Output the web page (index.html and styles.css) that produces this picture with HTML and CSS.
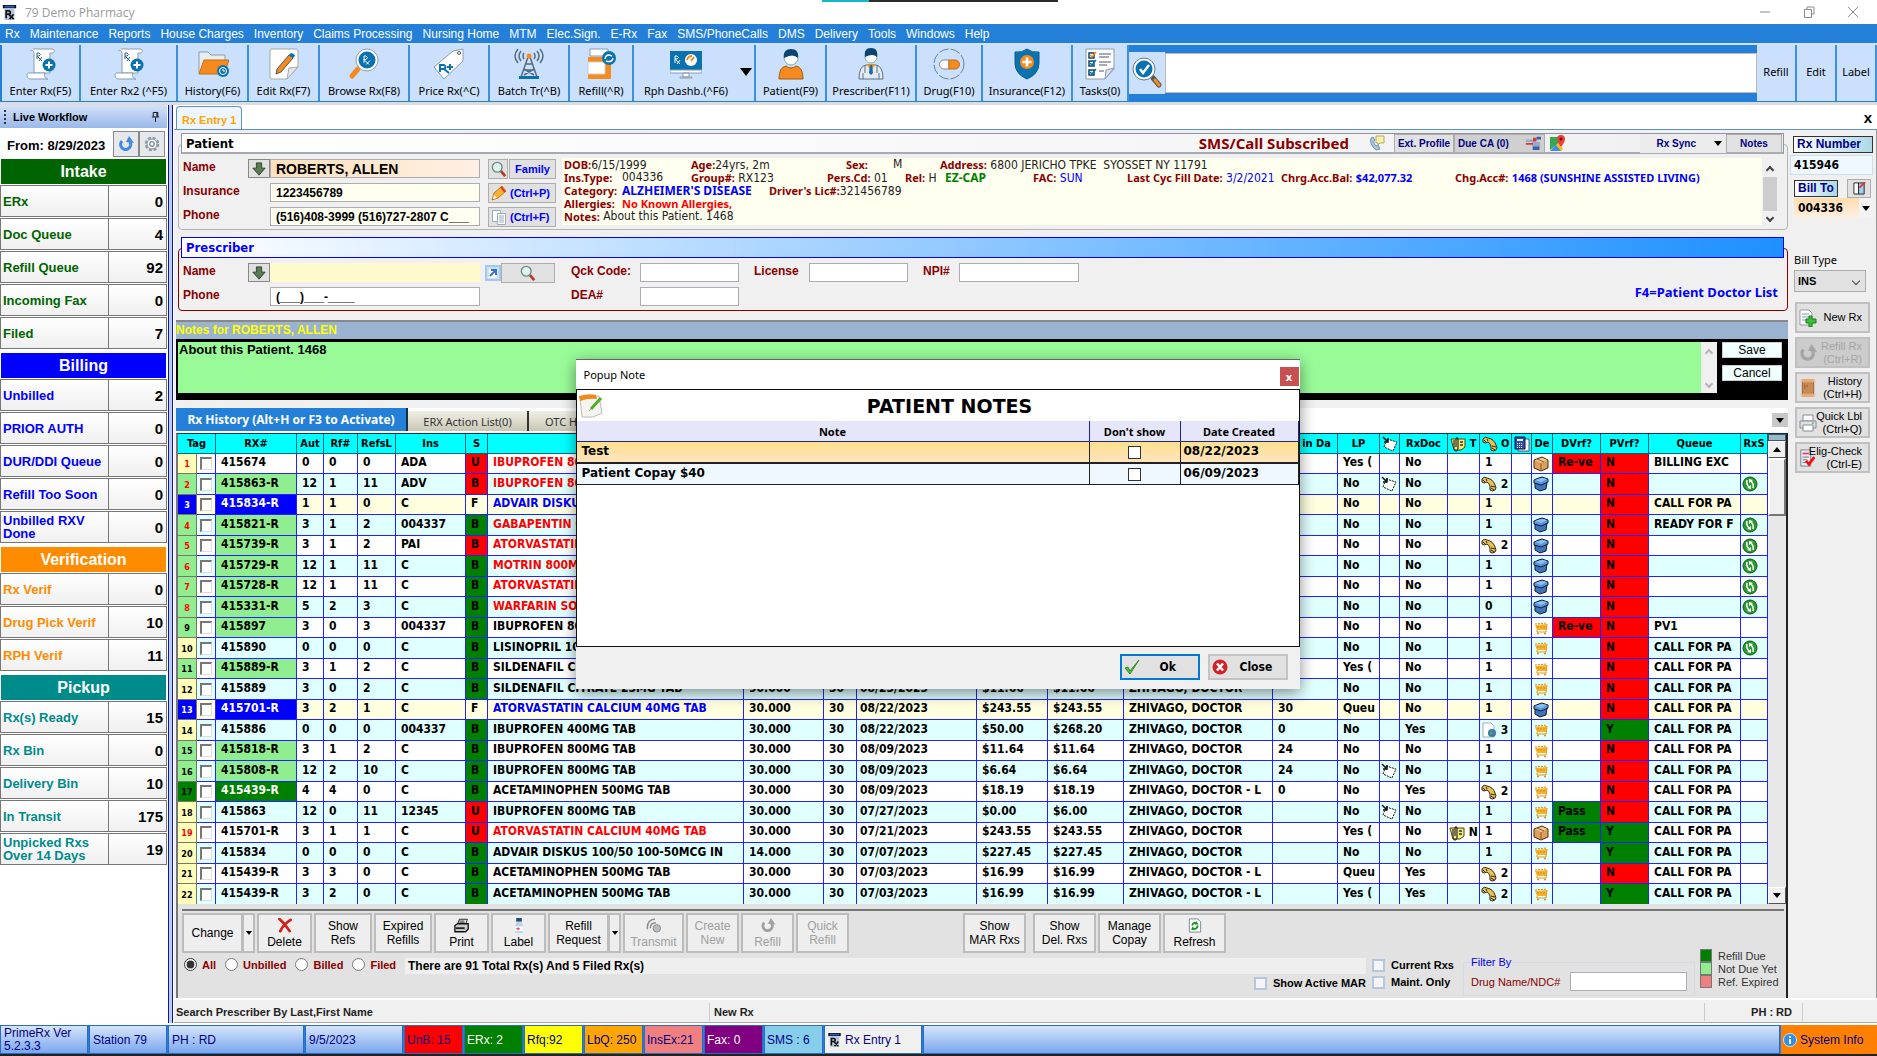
FILE: index.html
```html
<!DOCTYPE html>
<html lang="en">
<head>
<meta charset="utf-8">
<title>79 Demo Pharmacy</title>
<link rel="stylesheet" href="styles.css">
</head>
<body>
<svg class="sprite" aria-hidden="true">
    <symbol id="i-app" viewBox="0 0 16 18"><path fill="#111" d="M0 0h16v4H0z"/><path fill="#2b5dd0" d="M2 1h12v2H2z"/><path fill="#b8c4dc" d="M2 4h12v14H2z"/><path stroke="#111" stroke-width="2" d="M4 16V7h3a2 2 0 0 1 0 4H4m3 0 6 6m0-6-5 6"/></symbol>
    <symbol id="i-scroll" viewBox="0 0 32 32"><path fill="#fff" stroke="#8a9db0" d="M8 1h19c3 0 3 4 0 4h-2v20H9V6C9 3 7 1 5 3"/><path fill="#fff" stroke="#8a9db0" d="M4 25h16c-1 3 0 6 3 6H6c-5 0-5-6-2-6z"/><path stroke="#33628a" d="M12 11V5h2q3 1.500 0 3h-2l5 5m0-4-3 4"/><circle cx="24" cy="17" r="6.500" fill="#0b72b0"/><path stroke="#fff" stroke-width="2" d="M24 13.500v7M20.500 17h7"/></symbol>
    <symbol id="i-folder" viewBox="0 0 32 32"><path fill="#e8edf2" stroke="#8a9db0" d="M2 4h9l3 3h14v18H2z"/><path fill="#f58a1f" stroke="#c96a10" d="M7 12h25l-5 14H2z"/><circle cx="26" cy="23" r="6" fill="#0b72b0"/><circle cx="26" cy="23" r="3.500" stroke="#fff"/><path stroke="#fff" d="M26 21v2h2"/></symbol>
    <symbol id="i-edit" viewBox="0 0 32 32"><path fill="#fff" stroke="#a9a9a9" d="M4 1h24q2 0 2 2v16L19 31H4q-2 0-2-2V3q0-2 2-2z"/><path fill="#e6e6e6" stroke="#a9a9a9" d="m30 19-9 1-2 11z"/><path fill="#f58a1f" stroke="#555" d="m9 21 12-14 4 3-12 14-5 2z"/><path fill="#0b72b0" d="m21 7 2-2q4 1 4 3l-2 2z"/></symbol>
    <symbol id="i-browse" viewBox="0 0 32 32"><path stroke="#f58a1f" stroke-width="5" stroke-linecap="round" d="m4 28 6-7"/><circle cx="19" cy="12" r="11" fill="#fff" stroke="#8a9db0"/><circle cx="19" cy="12" r="8.500" fill="#0b72b0"/><path stroke="#fff" d="M16 15V8h2q3 1.500 0 3.500h-2l5 5m1-4-4 4"/></symbol>
    <symbol id="i-price" viewBox="0 0 32 32"><path fill="#fff" stroke="#8a9db0" d="m20 3 10-2v12L11 31 1 19z"/><circle cx="26" cy="5" r="1.500" stroke="#555"/><path stroke="#0b72b0" stroke-width="2" d="M7 24v-7h4q3 2 0 4H7m4 0 5 4m-2-6h6m-3-3v6"/></symbol>
    <symbol id="i-tower" viewBox="0 0 32 32"><path stroke="#556b80" stroke-width="1.500" d="M15 9 8 29m9-20 7 20M12 16h8M11 21l10 6M21 21l-10 6M10 22h12M11 5q-2 3 0 6M8 3q-4 5 0 10M5 1Q-1 8 5 15M21 5q2 3 0 6M24 3q4 5 0 10M27 1q6 7 0 14"/><circle cx="16" cy="8" r="2.500" fill="#f58a1f"/><path fill="#0b72b0" d="M6 28h20v3H6z"/></symbol>
    <symbol id="i-bottle" viewBox="0 0 32 32"><path fill="#fff" stroke="#8a9db0" d="M5 1h18v7H5z"/><path fill="#f58a1f" d="M3 9h23v22H3z"/><path fill="#fff" stroke="#ccc" d="M3 14h17v12H3z"/><circle cx="24" cy="10" r="7" fill="#0b72b0"/><path stroke="#fff" stroke-width="1.500" d="M20 11q1-6 7-3m1 2q-1 5-7 3"/></symbol>
    <symbol id="i-dash" viewBox="0 0 32 32"><path fill="#0b72b0" d="M0 3h32v20H0z"/><path fill="#fff" stroke="#8a9db0" d="M0 22h32v3H0zM13 25h6v4h-6zM10 29h12v1H10z"/><circle cx="21" cy="12" r="6" fill="#fff"/><path stroke="#f58a1f" stroke-width="2" d="m21 13 3-4m-7 3q1-4 5-4"/><path stroke="#fff" d="M5 15V8h2q3 1.500 0 3H5l5 5m0-4-3 4"/></symbol>
    <symbol id="i-patient" viewBox="0 0 32 32"><circle cx="16" cy="10" r="7" fill="#fff" stroke="#8aa"/><path fill="#0b4470" d="M9 10C8 4 11 1 16 1s8 3 7 9q-5-5-14 0z"/><path fill="#f58a1f" stroke="#a55a10" d="M4 31q0-12 7-13 5 4 10 0 7 1 7 13z"/></symbol>
    <symbol id="i-doctor" viewBox="0 0 32 32"><circle cx="16" cy="9" r="6" fill="#fff" stroke="#8aa"/><path fill="#0b4470" d="M10 9C9 3 11 0 16 0s7 3 6 9q-4-4-12 0z"/><path fill="#e4eaf0" stroke="#5d7387" d="M4 31q0-13 7-14h10q7 1 7 14z"/><path fill="#f58a1f" d="m12 16 4 8 4-8z"/><path fill="#0b72b0" d="M15 17h2l1 8-2 2-2-2z"/><path stroke="#5d7387" d="M10 17v8m12-8v8M8 25v6m16-6v6"/></symbol>
    <symbol id="i-drug" viewBox="0 0 32 32"><circle cx="16" cy="16" r="15" stroke="#6f8191" stroke-dasharray="10 2"/><path fill="#fff" stroke="#888" d="M16 12h-5a4 4 0 0 0 0 9h5z"/><path fill="#f58a1f" stroke="#c96a10" d="M16 12h6a4 4 0 0 1 0 9h-6z"/></symbol>
    <symbol id="i-shield" viewBox="0 0 32 32"><path fill="#0b72b0" stroke="#085a8c" d="M4 4q7 1 12-3 5 4 12 3v11q0 11-12 16Q4 26 4 15z"/><circle cx="16" cy="14" r="7" fill="#f58a1f"/><path stroke="#fff" stroke-width="2.500" d="M16 9.500v9M11.500 14h9"/></symbol>
    <symbol id="i-tasks" viewBox="0 0 32 32"><path fill="#fff" stroke="#8a9db0" d="M2 1h28v20l-9 10H2z"/><path fill="#dde" stroke="#8a9db0" d="m30 20-8 2-1 9z"/><path stroke="#0b4470" stroke-width="1.500" d="M5 5h5v5H5zM5 13h5v5H5zM5 22h5v5H5z"/><path stroke="#f58a1f" stroke-width="1.500" d="m6 7 2 2 4-5"/><path stroke="#0b72b0" stroke-width="1.500" d="m6 15 2 2 4-5m-6 12 2 2 4-5"/><path stroke="#556" d="M15 6h12M15 9h10M15 14h12M15 17h8M15 23h5"/></symbol>
    <symbol id="i-find" viewBox="0 0 32 32"><path stroke="#555" stroke-width="5" stroke-linecap="round" d="m22 21 6 7"/><path stroke="#f58a1f" stroke-width="3" stroke-linecap="round" d="m24 23 4 5"/><circle cx="13" cy="12" r="11" fill="#fff" stroke="#678"/><circle cx="13" cy="12" r="8.500" fill="#0b72b0"/><path stroke="#fff" stroke-width="2.500" d="m9 12 3 4 6-8"/></symbol>
    <symbol id="i-reload" viewBox="0 0 16 16"><path stroke="currentColor" stroke-width="3" d="M4 5a5 5 0 1 0 8 1"/><path fill="currentColor" d="m8 6 3-6 5 7z"/></symbol>
    <symbol id="i-gear" viewBox="0 0 16 16"><circle cx="8" cy="8" r="6" stroke="#8a97a5" stroke-width="2.500" stroke-dasharray="3 1.700"/><circle cx="8" cy="8" r="5" fill="#fff" stroke="#8a97a5"/><circle cx="8" cy="8" r="2.200" stroke="#8a97a5" stroke-width="1.500"/></symbol>
    <symbol id="i-pin" viewBox="0 0 10 12"><path stroke="#000" d="M2.500 6V1.500h5V6M1 6.500h8M5 7v5M6.500 2v4"/></symbol>
    <symbol id="i-down" viewBox="0 0 16 16"><path fill="#5c7a55" stroke="#263e22" d="M5 1h6v6h4l-7 8-7-8h4z"/></symbol>
    <symbol id="i-lens" viewBox="0 0 18 18"><path stroke="#b33a2a" stroke-width="3" d="m11 11 5 6"/><circle cx="7" cy="7" r="5.500" fill="#dff3ee" stroke="#6b8b83" stroke-width="1.500"/></symbol>
    <symbol id="i-pencil" viewBox="0 0 16 16"><path fill="#f9b233" stroke="#c4761a" d="M1 15 3 8l8-7 4 5-8 7z"/><path fill="#fff" d="m2 14 1-4 3 3z"/><path stroke="#d33" stroke-width="2" d="m10 2 4 5"/></symbol>
    <symbol id="i-copy" viewBox="0 0 16 16"><path fill="#fff" stroke="#9ab" d="M1.500 1.500h8v11h-8z"/><path fill="#fff" stroke="#9ab" d="M6.500 4.500h8v11h-8z"/><path stroke="#9ab" d="M8 7h5M8 9h5M8 11h5M8 13h5"/></symbol>
    <symbol id="i-link" viewBox="0 0 16 16"><path fill="#c9e0fa" stroke="#a5c8ee" stroke-width="2" d="M1 1h14v14H1z"/><path fill="#fff" d="M4 4h8v9H4z"/><path stroke="#3573c4" stroke-width="2" d="m5 11 6-6M6 5h5v5"/></symbol>
    <symbol id="i-call" viewBox="0 0 16 16"><path fill="#a9c4dd" stroke="#6f93b5" d="M2 3q-2 6 5 12l4-1-2-4-2 1q-3-3-2-5l1-1-2-3z"/><path fill="#fbf0b0" stroke="#b9a860" d="M7 1h8v7h-4l-2 2V8H7z"/></symbol>
    <symbol id="i-tool" viewBox="0 0 18 16"><path fill="#9aa9c4" d="M1 4h11v3H1zM8 7h9v9H8z"/><path fill="#d33" d="M1 8h8v2H1zM9 2h4v4H9z"/><path fill="#3b5ea8" d="M13 1h5v3h-5zM9 12h7v4H9z"/></symbol>
    <symbol id="i-map" viewBox="0 0 16 16"><path fill="#34a853" d="M1 2h9v6L1 15z"/><path fill="#fbbc04" d="m9 8 5 6-2 2-5-5z"/><path fill="#4285f4" d="m1 16 6-6 5 6z"/><path fill="#ea4335" d="M12 0a4 4 0 0 1 4 4q0 3-4 8-4-5-4-8a4 4 0 0 1 4-4z"/><circle cx="12" cy="4" r="1.500" fill="#701"/></symbol>
    <symbol id="i-form" viewBox="0 0 16 14"><path fill="#fff" stroke="#222" d="M2 1h5v12H2z"/><path fill="#9fd3ee" stroke="#222" d="M7 1h6v12H7z"/><path stroke="#d33" stroke-width="2" d="m8 6 6-6"/></symbol>
    <symbol id="i-newrx" viewBox="0 0 18 18"><path fill="#fff" stroke="#99a" d="M1 1h9l3 3v12H1z"/><path stroke="#7a9bc0" d="M3 5h7M3 8h7M3 11h5"/><path fill="#3fbf35" stroke="#1d7a18" d="M10 7h3v3h4v4h-4v4h-3v-4H7v-4h3z"/></symbol>
    <symbol id="i-roll" viewBox="0 0 18 22"><path fill="#c98a54" stroke="#8d5428" d="M2 3h14v16H2z"/><path fill="#e3ac7a" d="M1 0h16v4H1zM1 18h16v4H1z"/><path stroke="#8d5428" d="M5 7v5m3-5v3"/></symbol>
    <symbol id="i-printer" viewBox="0 0 18 18"><path fill="#fff" stroke="#889" d="M4 1h10v6H4z"/><path fill="#dde3e0" stroke="#889" d="M1 7h16v7H1z"/><path fill="#fff" stroke="#889" d="M4 11h10v6H4z"/><path stroke="#3a3" d="M13 9h2"/></symbol>
    <symbol id="i-elig" viewBox="0 0 18 20"><path fill="#e9e9f2" stroke="#778" d="M1 1h11v18H1z"/><path stroke="#d6466c" stroke-width="2" d="M3 5h7"/><path stroke="#667" d="M3 9h7M3 12h5M3 15h4"/><path stroke="#f01010" stroke-width="3" d="m7 13 3 4 6-8"/></symbol>
    <symbol id="i-x" viewBox="0 0 16 16"><path stroke="#d4201c" stroke-width="3" stroke-linecap="round" d="M2 1q6 5 11 13M14 2Q6 7 3 14"/></symbol>
    <symbol id="i-print" viewBox="0 0 18 16"><path fill="#fff" stroke="#111" d="M6 1h9l-2 6H4z"/><path stroke="#111" d="M6 3h6M6 5h6"/><path fill="#ccc" stroke="#111" stroke-width="1.500" d="M1 8l3-2h12v6l-3 3H1z"/><path fill="#222" d="M2 10h10v2H2z"/></symbol>
    <symbol id="i-vial" viewBox="0 0 12 16"><path fill="#24506e" d="M3 0h6v4H3z"/><path fill="#b8d4ea" d="M4 4h4l2 3v9H2V7z"/><path fill="#fff" d="M2 9h8v5H2z"/><path stroke="#d33" d="M3 11.500h4M5 10v3"/></symbol>
    <symbol id="i-dish" viewBox="0 0 16 16"><path stroke="#8c8c8c" stroke-width="1.500" d="M1 12Q0 2 9 1M4 11q0-6 6-6"/><circle cx="11" cy="11" r="4" fill="#bbb" stroke="#8c8c8c"/></symbol>
    <symbol id="i-refresh" viewBox="0 0 14 16"><path fill="#fff" stroke="#789" d="M1 1h9l3 3v11H1z"/><path stroke="#169a1c" stroke-width="2" d="M4 8q1-4 5-2m1 2q-1 5-6 3"/><path fill="#169a1c" d="m8 3 3 4H7zM3 13l1-4 3 3z"/></symbol>
    <symbol id="i-info" viewBox="0 0 14 14"><circle cx="7" cy="7" r="6.500" fill="#2f8fe6" stroke="#bfe0fa"/><path stroke="#fff" stroke-width="2" d="M7 3v2m0 1v5"/></symbol>
    <symbol id="i-note" viewBox="0 0 16 16"><path fill="#fff" stroke="#111" stroke-dasharray="2 1" d="m5 3 10 3-4 9-9-4z"/><path stroke="#111" stroke-width="1.500" d="m1 1 5 5m0-4v4H2"/></symbol>
    <symbol id="i-phone" viewBox="0 0 16 16"><path fill="#e8c15c" stroke="#33250a" d="M1 3q2-3 5-1 6 1 8 7 2 3 0 5-3 2-5 0v-4Q8 7 6 6q-3 2-5 0z"/><path stroke="#33250a" d="m2 4 2 2m1-3 1 2m4 5 4 1m-4 1 3 2"/></symbol>
    <symbol id="i-page" viewBox="0 0 16 16"><path fill="#fff" stroke="#aab" d="M2 1h8l3 3v11H2z"/><circle cx="11" cy="11" r="4" fill="#3a78b8"/><path fill="#4fae4a" d="m9 9 3 1-1 3-2-1z"/></symbol>
    <symbol id="i-clip" viewBox="0 0 16 16"><path fill="#f7ec7a" stroke="#4a4310" d="M1 3h14v8l-4 3H4z"/><path stroke="#333" stroke-width="1.300" d="M4 4v9q2 4 4 0V3q-1-2-2 0v8M10 6h3M10 9h3"/></symbol>
    <symbol id="i-calc" viewBox="0 0 16 16"><path fill="#fff" stroke="#557" d="M4 3h11v12H4z"/><path fill="#3848b4" stroke="#114" d="M1 1h10v12H1z"/><path fill="#cfe" d="M3 3h6v2H3z"/><path stroke="#cfe" stroke-dasharray="1 1" d="M3 7.500h6M3 9.500h6M3 11.500h6"/></symbol>
    <symbol id="i-box" viewBox="0 0 16 16"><path fill="#dca05c" stroke="#4c2c0c" d="m1 4 8-3 6 3v8l-7 3-7-3z"/><path fill="#f3cc98" d="m2 4 7-2 5 2-6 3z"/><path stroke="#8a5b28" d="M8 7v8M4 3l7 3"/></symbol>
    <symbol id="i-bin" viewBox="0 0 16 16"><path fill="#3f74b8" stroke="#0c1c3c" d="M2 7v5l5 3 6-2 1-7z"/><path fill="#5b95da" stroke="#0c1c3c" d="M1 4q4-2 8-3l6 2v3l-7 3-7-2z"/><path fill="#8fc0f2" d="m2 4 7-2 5 1-6 3z"/></symbol>
    <symbol id="i-cart" viewBox="0 0 16 16"><path fill="#f7b12a" d="m2 5 12-1-1 6H4z"/><path stroke="#d98a10" stroke-dasharray="2 1" d="M2 4l12-1M4 7h9"/><path stroke="#e09a1c" d="M4 10v2h9l1-8"/><circle cx="5" cy="13.500" r="1" fill="#d98a10"/><circle cx="12" cy="13.500" r="1" fill="#d98a10"/></symbol>
    <symbol id="i-sync" viewBox="0 0 16 16"><circle cx="8" cy="8" r="7" fill="#2b9a30" stroke="#0c5a12"/><path stroke="#fff" stroke-width="1.500" d="M5 4q-1 4 2 7m4 1q1-4-2-7"/><path fill="#fff" d="m5 12 4 1V9zM11 4 7 3v4z"/></symbol>
    <symbol id="i-pad" viewBox="0 0 24 24"><path fill="#f4f4f0" stroke="#bbb" d="m1 3 19-1 3 17-9 4H3z"/><path fill="#f08a1c" d="M0 2q10-3 17-1l1 4Q9 4 1 7z"/><path stroke="#4fae2a" stroke-width="3" d="m12 15 10-11"/><path stroke="#c9a" d="m10 17 2-2"/></symbol>
    <symbol id="i-check" viewBox="0 0 16 16"><path fill="#4cc23f" stroke="#2c8a26" d="m1 9 3-1 2 4L15 1 6 15z"/></symbol>
    <symbol id="i-stop" viewBox="0 0 16 16"><circle cx="8" cy="8" r="7.500" fill="#d3222a"/><path stroke="#fff" stroke-width="2.500" d="m5 4.500 6 7m0-7-6 7"/></symbol>
</svg>

<div class="app">
    <header class="titlebar">
        <svg class="app-icon"><use href="#i-app"/></svg>
        <span>79 Demo Pharmacy</span>
        <div class="top-strip"></div>
        <div class="win-buttons">
            <button type="button" aria-label="Minimize"><svg viewBox="0 0 12 12"><path d="M1 6h10"/></svg></button>
            <button type="button" aria-label="Restore"><svg viewBox="0 0 12 12"><path d="M1.500 3.500h7v8h-7zM4 3V1h7v7H9"/></svg></button>
            <button type="button" aria-label="Close window"><svg viewBox="0 0 12 12"><path d="m1 1 10 10M11 1 1 11"/></svg></button>
        </div>
    </header>

    <nav class="menubar">
        <a href="#">Rx</a><a href="#">Maintenance</a><a href="#">Reports</a><a href="#">House Charges</a><a href="#">Inventory</a><a href="#">Claims Processing</a><a href="#">Nursing Home</a><a href="#">MTM</a><a href="#">Elec.Sign.</a><a href="#">E-Rx</a><a href="#">Fax</a><a href="#">SMS/PhoneCalls</a><a href="#">DMS</a><a href="#">Delivery</a><a href="#">Tools</a><a href="#">Windows</a><a href="#">Help</a>
    </nav>

    <div class="toolbar">
        <button type="button" class="w78"><svg><use href="#i-scroll"/></svg>Enter Rx(F5)</button>
        <button type="button" class="w96"><svg><use href="#i-scroll"/></svg>Enter Rx2 (^F5)</button>
        <button type="button" class="w71"><svg><use href="#i-folder"/></svg>History(F6)</button>
        <button type="button" class="w71"><svg><use href="#i-edit"/></svg>Edit Rx(F7)</button>
        <button type="button" class="w90"><svg><use href="#i-browse"/></svg>Browse Rx(F8)</button>
        <button type="button" class="w80"><svg><use href="#i-price"/></svg>Price Rx(^C)</button>
        <button type="button" class="w80"><svg><use href="#i-tower"/></svg>Batch Tr(^B)</button>
        <button type="button" class="w64"><svg><use href="#i-bottle"/></svg>Refill(^R)</button>
        <button type="button" class="w104"><svg><use href="#i-dash"/></svg>Rph Dashb.(^F6)</button>
        <button type="button" class="drop" aria-label="Dashboard options"><i class="tri big"></i></button>
        <button type="button" class="w71"><svg><use href="#i-patient"/></svg>Patient(F9)</button>
        <button type="button" class="w90"><svg><use href="#i-doctor"/></svg>Prescriber(F11)</button>
        <button type="button" class="w66"><svg><use href="#i-drug"/></svg>Drug(F10)</button>
        <button type="button" class="w90"><svg><use href="#i-shield"/></svg>Insurance(F12)</button>
        <button type="button" class="w56"><svg><use href="#i-tasks"/></svg>Tasks(0)</button>
        <div class="quick-find">
            <svg><use href="#i-find"/></svg>
            <input type="text" aria-label="Quick search">
        </div>
        <button type="button" class="w40">Refill</button>
        <button type="button" class="w40">Edit</button>
        <button type="button" class="w40">Label</button>
    </div>

    <div class="middle">
        <aside class="sidebar">
            <div class="side-head"><i class="grip"></i><b>Live Workflow</b><svg><use href="#i-pin"/></svg></div>
            <div class="side-from">
                <span>From: 8/29/2023</span>
                <button type="button" aria-label="Reload" class="blue"><svg><use href="#i-reload"/></svg></button>
                <button type="button" aria-label="Settings"><svg><use href="#i-gear"/></svg></button>
            </div>
            <section class="queue intake">
                <h2>Intake</h2>
                <dl>
                    <dt>ERx</dt><dd>0</dd>
                    <dt>Doc Queue</dt><dd>4</dd>
                    <dt>Refill Queue</dt><dd>92</dd>
                    <dt>Incoming Fax</dt><dd>0</dd>
                    <dt>Filed</dt><dd>7</dd>
                </dl>
            </section>
            <section class="queue billing">
                <h2>Billing</h2>
                <dl>
                    <dt>Unbilled</dt><dd>2</dd>
                    <dt>PRIOR AUTH</dt><dd>0</dd>
                    <dt>DUR/DDI Queue</dt><dd>0</dd>
                    <dt>Refill Too Soon</dt><dd>0</dd>
                    <dt>Unbilled RXV Done</dt><dd>0</dd>
                </dl>
            </section>
            <section class="queue verif">
                <h2>Verification</h2>
                <dl>
                    <dt>Rx Verif</dt><dd>0</dd>
                    <dt>Drug Pick Verif</dt><dd>10</dd>
                    <dt>RPH Verif</dt><dd>11</dd>
                </dl>
            </section>
            <section class="queue pickup">
                <h2>Pickup</h2>
                <dl>
                    <dt>Rx(s) Ready</dt><dd>15</dd>
                    <dt>Rx Bin</dt><dd>0</dd>
                    <dt>Delivery Bin</dt><dd>10</dd>
                    <dt>In Transit</dt><dd>175</dd>
                    <dt>Unpicked Rxs Over 14 Days</dt><dd>19</dd>
                </dl>
            </section>
        </aside>
        <div class="splitter"></div>

        <main class="work">
            <div class="doc-tabs">
                <a href="#" class="doc-tab">Rx Entry 1</a>
                <button type="button" class="doc-close" aria-label="Close tab">x</button>
            </div>

            <div class="work-body">
                <div class="entry">
                    <section class="group patient">
                        <div class="group-head">
                            <h3>Patient</h3>
                            <strong class="sms">SMS/Call Subscribed</strong>
                            <svg class="ic16"><use href="#i-call"/></svg>
                            <button type="button" class="ext">Ext. Profile</button>
                            <button type="button" class="due">Due CA (0)<svg class="ic16"><use href="#i-tool"/></svg></button>
                            <svg class="ic16 map"><use href="#i-map"/></svg>
                            <button type="button" class="sync">Rx Sync<i class="tri"></i></button>
                            <button type="button" class="notes-btn">Notes</button>
                        </div>
                        <div class="group-body">
                            <div class="fields">
                                <label for="p-name">Name</label>
                                <button type="button" class="pick" aria-label="Pick patient"><svg><use href="#i-down"/></svg></button>
                                <input id="p-name" class="name" type="text" value="ROBERTS, ALLEN">
                                <label for="p-ins">Insurance</label>
                                <input id="p-ins" class="col3 ivory" type="text" value="1223456789">
                                <label for="p-phone">Phone</label>
                                <input id="p-phone" class="col3 ivory" type="text" value="(516)408-3999 (516)727-2807 C___">
                            </div>
                            <div class="side-buttons">
                                <div><button type="button" class="lens" aria-label="Find patient"><svg><use href="#i-lens"/></svg></button><button type="button" class="fam">Family</button></div>
                                <button type="button"><svg><use href="#i-pencil"/></svg>(Ctrl+P)</button>
                                <button type="button"><svg><use href="#i-copy"/></svg>(Ctrl+F)</button>
                            </div>
                            <div class="info">
                                <div class="info-text">
                                    <p><span class="c1"><b>DOB:</b>6/15/1999</span><span class="c2"><b>Age:</b>24yrs, 2m</span><span class="c3"><b>Sex:</b></span><span class="c4">M</span><span><b>Address:</b> 6800 JERICHO TPKE &nbsp;SYOSSET NY 11791</span></p>
                                    <p><span class="c0"><b>Ins.Type:</b></span><span class="c01">004336</span><span class="c5"><b>Group#:</b> RX123</span><span class="c6"><b>Pers.Cd:</b> 01</span><span class="c7"><b>Rel:</b> H</span><span class="c8 ez">EZ-CAP</span><span class="c9"><b>FAC:</b> <i>SUN</i></span><span class="c10"><b>Last Cyc Fill Date:</b> <i>3/2/2021</i></span><span class="c11"><b>Chrg.Acc.Bal:</b> <em>$42,077.32</em></span><span><b>Chg.Acc#:</b> <em>1468 (SUNSHINE ASSISTED LIVING)</em></span></p>
                                    <p><span class="c0"><b>Category:</b></span><span class="c12"><em class="large">ALZHEIMER'S DISEASE</em></span><span><b>Driver's Lic#:</b>321456789</span></p>
                                    <p><span class="c0"><b>Allergies:</b></span><span class="red">No Known Allergies,</span></p>
                                    <p><b>Notes:</b> About this Patient. 1468</p>
                                </div>
                                <div class="vbar"><i class="chev up"></i><i class="thumb"></i><i class="chev"></i></div>
                            </div>
                        </div>
                    </section>

                    <section class="group prescriber">
                        <div class="group-head"><h3>Prescriber</h3></div>
                        <div class="group-body">
                            <div class="fields">
                                <label for="d-name">Name</label>
                                <button type="button" class="pick" aria-label="Pick prescriber"><svg><use href="#i-down"/></svg></button>
                                <input id="d-name" class="lemon" type="text">
                                <label for="d-phone">Phone</label>
                                <input id="d-phone" class="col3" type="text" value="(___)___-____">
                            </div>
                            <div class="find-pair"><svg class="ic16"><use href="#i-link"/></svg><button type="button" aria-label="Find prescriber"><svg class="ic16"><use href="#i-lens"/></svg></button></div>
                            <div class="codes">
                                <label for="qck">Qck Code:</label><input id="qck" type="text">
                                <label for="lic">License</label><input id="lic" type="text">
                                <label for="npi">NPI#</label><input id="npi" type="text">
                                <label for="dea">DEA#</label><input id="dea" type="text">
                            </div>
                            <strong class="f4">F4=Patient Doctor List</strong>
                        </div>
                    </section>

                    <section class="notes">
                        <h3>Notes for ROBERTS, ALLEN</h3>
                        <div class="notes-body">
                            <textarea aria-label="Patient note">About this Patient. 1468</textarea>
                            <div class="vbar"><i class="chev up pale"></i><i class="chev pale"></i></div>
                            <div class="notes-buttons">
                                <button type="button">Save</button>
                                <button type="button">Cancel</button>
                            </div>
                        </div>
                    </section>

                    <div class="tabs">
                        <button type="button" class="on">Rx History (Alt+H or F3 to Activate)</button>
                        <button type="button">ERX Action List(0)</button>
                        <button type="button" class="otc">OTC History(0)</button>
                        <button type="button" class="more" aria-label="More tabs"><i class="tri"></i></button>
                    </div>

                    <div class="history">
                        <div class="grid-wrap">
                            <table class="grid">
                                <colgroup>
                                    <col class="k19"><col class="k19"><col class="k81"><col class="k27"><col class="k34"><col class="k38"><col class="k70"><col class="k22"><col><col class="k80"><col class="k33"><col class="k120"><col class="k71"><col class="k76"><col class="k149"><col class="k65"><col class="k42"><col class="k20"><col class="k48"><col class="k32"><col class="k32"><col class="k20"><col class="k21"><col class="k48"><col class="k48"><col class="k92"><col class="k27">
                                </colgroup>
                                <thead>
                                    <tr>
                                        <th colspan="2">Tag</th><th>RX#</th><th>Aut</th><th>Rf#</th><th>RefsL</th><th>Ins</th><th>S</th><th>Drug</th><th>Qty</th><th>Ds</th><th>Fill Date</th><th>Cost</th><th>Price</th><th>Doctor</th><th class="end">in Da</th><th>LP</th><th><svg><use href="#i-note"/></svg></th><th>RxDoc</th><th><svg><use href="#i-clip"/></svg> T</th><th><svg><use href="#i-phone"/></svg> O</th><th><svg><use href="#i-calc"/></svg></th><th>De</th><th>DVrf?</th><th>PVrf?</th><th>Queue</th><th>RxS</th>
                                    </tr>
                                </thead>
                                <tbody id="rows"></tbody>
                            </table>
                            <div class="grid-bar"><i class="split"></i><i class="btn"><i class="tri upw"></i></i><i class="thumb"></i><i class="btn last"><i class="tri"></i></i></div>
                        </div>

                        <div class="actions">
                            <button type="button" class="a60">Change</button><button type="button" class="arrow" aria-label="Change options"><i class="tri sm"></i></button>
                            <button type="button" class="a56"><svg><use href="#i-x"/></svg>Delete</button>
                            <button type="button" class="a58">Show Refs</button>
                            <button type="button" class="a58">Expired Refills</button>
                            <button type="button" class="a56"><svg><use href="#i-print"/></svg>Print</button>
                            <button type="button" class="a56"><svg><use href="#i-vial"/></svg>Label</button>
                            <button type="button" class="a60">Refill Request</button><button type="button" class="arrow" aria-label="Refill options"><i class="tri sm"></i></button>
                            <button type="button" class="a60" disabled><svg><use href="#i-dish"/></svg>Transmit</button>
                            <button type="button" class="a54" disabled>Create New</button>
                            <button type="button" class="a54" disabled><svg><use href="#i-reload"/></svg>Refill</button>
                            <button type="button" class="a54" disabled>Quick Refill</button>
                            <button type="button" class="a64 apart"><span>Show<br>MAR Rxs</span></button>
                            <button type="button" class="a64 near"><span>Show<br>Del. Rxs</span></button>
                            <button type="button" class="a64">Manage Copay</button>
                            <button type="button" class="a64"><svg><use href="#i-refresh"/></svg>Refresh</button>
                        </div>

                        <div class="filters">
                            <div class="radios">
                                <label><input type="radio" name="f" checked>All</label>
                                <label><input type="radio" name="f">Unbilled</label>
                                <label><input type="radio" name="f">Billed</label>
                                <label><input type="radio" name="f">Filed</label>
                            </div>
                            <div class="count">
                                <p>There are 91 Total Rx(s) And 5 Filed Rx(s)</p>
                                <label><input type="checkbox">Show Active MAR</label>
                            </div>
                            <div class="checks">
                                <label><input type="checkbox">Current Rxs</label>
                                <label><input type="checkbox">Maint. Only</label>
                            </div>
                            <fieldset class="filter-by">
                                <legend>Filter By</legend>
                                <label for="ndc">Drug Name/NDC#</label>
                                <input id="ndc" type="text">
                            </fieldset>
                            <ul class="legend">
                                <li><i class="due-now"></i>Refill Due</li>
                                <li><i class="not-due"></i>Not Due Yet</li>
                                <li><i class="expired"></i>Ref. Expired</li>
                            </ul>
                        </div>
                    </div>
                </div>

                <aside class="rail">
                    <b class="rail-label">Rx Number</b>
                    <input class="rx-no" type="text" value="415946" aria-label="Rx Number">
                    <div class="bill-row"><b class="rail-label">Bill To</b><button type="button" aria-label="Edit bill to"><svg><use href="#i-form"/></svg></button></div>
                    <div class="combo"><input type="text" value="004336" aria-label="Bill To"><button type="button" aria-label="Bill to list"><i class="tri"></i></button></div>
                    <label class="bill-type" for="btype">Bill Type</label>
                    <div class="sel"><select id="btype"><option>INS</option></select><i class="chev"></i></div>
                    <div class="rail-buttons">
                        <button type="button"><svg><use href="#i-newrx"/></svg><span>New Rx</span></button>
                        <button type="button" disabled><svg><use href="#i-reload"/></svg><span>Refill Rx (Ctrl+R)</span></button>
                        <button type="button"><svg><use href="#i-roll"/></svg><span>History (Ctrl+H)</span></button>
                        <button type="button"><svg><use href="#i-printer"/></svg><span>Quick Lbl (Ctrl+Q)</span></button>
                        <button type="button"><svg><use href="#i-elig"/></svg><span>Elig-Check (Ctrl-E)</span></button>
                    </div>
                </aside>
            </div>

            <div class="hint">
                <span class="h1">Search Prescriber By Last,First Name</span>
                <span class="h2">New Rx</span>
                <span class="h3">PH : RD</span>
                <span class="h4"></span>
            </div>
        </main>
    </div>

    <footer class="statusbar">
        <span class="s88 two">PrimeRx Ver 5.2.3.3</span>
        <span class="s78">Station 79</span>
        <span class="s137">PH : RD</span>
        <span class="s98">9/5/2023</span>
        <span class="s59 unb">UnB: 15</span>
        <span class="s59 erx">ERx: 2</span>
        <span class="s59 rfq">Rfq:92</span>
        <span class="s59 lbq">LbQ: 250</span>
        <span class="s59 inx">InsEx:21</span>
        <span class="s59 fax">Fax: 0</span>
        <span class="s59 smsq">SMS : 6</span>
        <span class="s98 task"><svg><use href="#i-app"/></svg>Rx Entry 1</span>
        <span class="fill"></span>
        <button type="button" class="sys"><svg><use href="#i-info"/></svg>System Info</button>
    </footer>
</div>

<div class="popup" role="dialog" aria-label="Popup Note">
    <div class="popup-title"><span>Popup Note</span><button type="button" aria-label="Close popup">x</button></div>
    <div class="popup-body">
        <div class="popup-head"><svg><use href="#i-pad"/></svg><h1>PATIENT NOTES</h1></div>
        <table class="note-table">
            <thead><tr><th>Note</th><th class="k91">Don't show</th><th class="k118">Date Created</th></tr></thead>
            <tbody>
                <tr class="sel-row"><td>Test</td><td class="mid"><input type="checkbox" aria-label="Don't show Test"></td><td>08/22/2023</td></tr>
                <tr><td>Patient Copay $40</td><td class="mid"><input type="checkbox" aria-label="Don't show Patient Copay"></td><td>06/09/2023</td></tr>
            </tbody>
        </table>
    </div>
    <div class="popup-foot">
        <button type="button" class="ok"><svg><use href="#i-check"/></svg>Ok</button>
        <button type="button"><svg><use href="#i-stop"/></svg>Close</button>
    </div>
</div>
<script src="script.js"></script>
</body>
</html>
```

FILE: styles.css
```css
* { box-sizing: border-box; }
body {
    margin: 0;
    background: #f0f0f0;
    font-family: "Liberation Sans", Arial, sans-serif;
    font-size: 12px;
    color: #000;
}
button, input, select, textarea { font: inherit; color: inherit; margin: 0; }
button { padding: 0; border: 1px solid #adadad; background: #e1e1e1; white-space: nowrap; }
input[type=text] { border: 1px solid #abadb3; background: #fff; padding: 0 5px; min-width: 0; }
a { text-decoration: none; color: inherit; }
h1, h2, h3, p, dl, dd, ul { margin: 0; padding: 0; }
svg { display: block; flex: none; }
.sprite { position: absolute; width: 0; height: 0; }
.sprite symbol { fill: none; }
.ic16 { width: 16px; height: 16px; }

.tri { display: block; border: 4px solid transparent; border-top: 5px solid #000; border-bottom: 0; }
.tri.big { border-width: 6px; border-top-width: 8px; border-bottom: 0; }
.tri.sm { border-width: 3px; border-top-width: 4px; border-bottom: 0; }
.tri.upw { border-top: 0; border-bottom: 5px solid #000; }
.chev { display: block; width: 6px; height: 6px; border: solid #444; border-width: 0 2px 2px 0; transform: rotate(45deg); }
.chev.up { transform: rotate(225deg); }
.chev.pale { border-color: #b5b5b5; }

.app { display: flex; flex-direction: column; height: 100vh; min-height: 1056px; background: #fff; }

/* title, menu, toolbar */
.titlebar { display: flex; align-items: center; height: 24px; padding: 0 8px 0 2px; color: #999; gap: 8px; font-family: "Open Sans", sans-serif; }
.app-icon { width: 15px; height: 15px; }
.top-strip { align-self: flex-start; height: 2px; width: 236px; margin-left: 680px; background: linear-gradient(90deg, #14b8c4 0 47px, #2d2d2d 47px); }
.win-buttons { display: flex; gap: 32px; margin-left: auto; padding-right: 10px; }
.win-buttons button { border: 0; background: none; width: 12px; height: 12px; }
.win-buttons svg { width: 12px; height: 12px; fill: none; stroke: #8a8a8a; }

.menubar { display: flex; align-items: center; gap: 10px; height: 19px; padding-left: 5px; background: #247fd9; color: #fff; }

.toolbar { display: flex; height: 62px; padding: 0 0 1px 2px; background: #247fd9; border-top: 2px solid #cfe3f8; border-bottom: 3px solid #dcdcdc; }
.toolbar button { display: flex; flex-direction: column; align-items: center; justify-content: flex-end; gap: 3px; flex: none; border: 0; border-right: 2px solid #3d8fe0; background: #cae0fc; padding-bottom: 2px; font-family: "Noto Sans", sans-serif; font-size: 11px; line-height: 16px; }
.toolbar button svg { width: 32px; height: 32px; }
.toolbar .w40 { width: 40px; justify-content: center; }
.toolbar .w56 { width: 56px; }
.toolbar .w64 { width: 64px; }
.toolbar .w66 { width: 66px; }
.toolbar .w71 { width: 71px; }
.toolbar .w78 { width: 79px; }
.toolbar .w80 { width: 80px; }
.toolbar .w90 { width: 90px; }
.toolbar .w96 { width: 97px; }
.toolbar .w104 { width: 104px; border-right: 0; }
.toolbar .drop { width: 18px; justify-content: center; }
.quick-find { display: flex; align-items: center; flex: 1; }
.quick-find svg { width: 36px; height: 42px; padding: 2px; background: #cae0fc; }
.quick-find input { flex: 1; height: 40px; border: 1px solid #bbb; }

/* workflow panel */
.middle { display: flex; flex: 1; min-height: 0; }
.sidebar { width: 167px; flex: none; background: #fff; }
.side-head { display: flex; align-items: center; height: 23px; padding: 0 7px 0 4px; background: linear-gradient(#d3e2f8, #9ab8ea); font-size: 11px; gap: 7px; }
.side-head svg { width: 9px; height: 11px; margin-left: auto; }
.grip { height: 14px; border-left: 2px dotted #334; }
.side-from { display: flex; height: 31px; padding: 3px 2px 2px 7px; align-items: center; font-weight: bold; font-size: 12px; }
.side-from span { flex: 1; padding-top: 3px; font-size: 13px; white-space: nowrap; }
.side-from button { width: 26px; height: 26px; display: grid; place-items: center; border-color: #888; background: #e6e8ec; }
.side-from svg { width: 16px; height: 16px; }
.blue { color: #3d8be6; }
.queue { margin-bottom: 2px; }
.queue h2 { height: 25px; margin: 0 1px 1px; line-height: 25px; text-align: center; color: #fff; font-size: 16px; font-weight: bold; }
.queue dl { display: grid; grid-template-columns: 109px 58px; row-gap: 1px; padding-bottom: 2px; }
.queue dt, .queue dd { display: flex; align-items: center; height: 32px; border: 1px solid #777; background: linear-gradient(#fff, #f0f0f0); font-weight: bold; }
.queue dt { padding-left: 2px; line-height: 13px; font-size: 13px; }
.queue dd { justify-content: flex-end; padding-right: 3px; font-size: 15px; border-left: 0; }
.intake h2 { background: #006400; } .intake dt { color: #006400; }
.billing h2 { background: #00f; } .billing dt { color: #00f; }
.verif h2 { background: #ff8c00; } .verif dt { color: #ff8c00; }
.pickup h2 { background: #008b8b; } .pickup dt { color: #008b8b; }
.splitter { width: 5px; flex: none; margin: 0 1px; border: solid #14149c; border-width: 0 1px; background: #b8cff5; }

/* document area */
.work { display: flex; flex-direction: column; flex: 1; min-width: 0; background: #f0f0f0; }
.doc-tabs { display: flex; align-items: flex-end; justify-content: space-between; height: 25px; padding: 0 3px 0 2px; background: #fff; border-bottom: 1px solid #5b93c8; }
.doc-tab { height: 23px; padding: 0 5px; line-height: 26px; border: 1px solid #5b93c8; border-bottom: 0; border-radius: 4px 4px 0 0; background: #eef5fc; color: #ffa500; font-weight: bold; font-size: 11px; }
.doc-close { border: 0; background: none; font-weight: bold; font-size: 15px; width: 12px; line-height: 22px; }
.work-body { display: flex; flex: 1; min-height: 0; border-right: 1px solid #999; }
.entry { flex: 1; min-width: 0; padding: 3px 0 0 2px; display: flex; flex-direction: column; }

.group { margin: 0 0 7px 2px; }
.group-head { position: relative; display: flex; align-items: center; height: 21px; margin: 0 4px 0 3px; padding-left: 4px; border: 1px solid #8c96a5; }
.group-head h3 { font: bold 13px "DejaVu Sans Condensed", "DejaVu Sans", sans-serif; }
.group-body { display: flex; margin-top: -10px; padding: 14px 9px 2px 4px; border: 1px solid #b4b4b4; border-radius: 4px; }
.patient .group-head { background: linear-gradient(90deg, #fff, #f0f0f0); border-bottom: 2px solid #a5aab4; }
.sms { margin: 0 20px 0 auto; color: #8b0000; font: bold 15px "Noto Sans", sans-serif; }
.group-head button { height: 19px; color: navy; font-weight: bold; font-size: 10px; }
.ext { width: 60px; margin-left: 9px; }
.due { display: flex; align-items: center; justify-content: space-between; width: 91px; padding: 0 3px; background: #d0d0d0; }
.map { margin: 0 75px 0 4px; }
.sync { display: flex; align-items: center; justify-content: flex-end; gap: 18px; width: 86px; padding-right: 4px; border: 0; background: #ececec; }
.notes-btn { width: 56px; margin-right: 1px; }
.fields { display: grid; grid-template-columns: 65px 22px 210px; grid-auto-rows: 19px; row-gap: 5px; align-content: start; align-items: stretch; }
.fields label, .codes label { color: #8b0000; font-weight: bold; font-size: 12px; line-height: 17px; }
.fields .col3 { grid-column: 3; }
.fields input { font-weight: bold; }
.fields .name { font-size: 14px; background: linear-gradient(90deg, #ffe0bc, #fff0e4); }
.fields .ivory { background: #fffff0; }
.fields .lemon { background: #fffacd; border-color: #fffacd; }
.pick { display: grid; place-items: center; border-color: #888; }
.pick svg { width: 14px; height: 14px; }
.side-buttons { display: grid; grid-auto-rows: 20px; row-gap: 4px; width: 68px; margin: 0 6px 0 8px; align-content: start; }
.side-buttons div { display: flex; gap: 1px; }
.side-buttons button { display: flex; align-items: center; gap: 3px; padding-left: 2px; color: #00f; font-weight: bold; font-size: 11px; }
.side-buttons svg { width: 16px; height: 16px; }
.side-buttons .fam { flex: 1; justify-content: center; padding: 0; }
.lens { width: 20px; }
.info { display: flex; flex: 1; min-width: 0; height: 67px; margin-top: -1px; background: #fffff0; }
.info-text { flex: 1; min-width: 0; overflow: hidden; padding-left: 2px; font-family: "DejaVu Sans Condensed", "DejaVu Sans", sans-serif; font-size: 12px; line-height: 13px; color: #222; }
.info-text p { display: flex; height: 13px; white-space: pre; }
.info-text b, .info-text em { font-family: "Noto Sans", sans-serif; font-size: 11px; font-weight: bold; font-style: normal; }
.info-text b { color: #8b0000; }
.info-text em { color: #00f; }
.info-text .large { font-size: 12px; }
.info-text span, .info-text em { flex: none; }
.info-text i { color: #00f; font-style: normal; }
.ez { color: green; font-weight: bold; font-family: "Noto Sans", sans-serif; }
.red { color: red; font-weight: bold; font-family: "Noto Sans", sans-serif; font-size: 11px; }
.c0 { width: 58px; } .c01 { width: 69px; } .c1 { width: 127px; } .c2 { width: 155px; } .c3 { width: 47px; } .c4 { width: 47px; }
.c5 { width: 136px; } .c6 { width: 78px; } .c7 { width: 40px; } .c8 { width: 88px; } .c9 { width: 94px; } .c10 { width: 154px; } .c11 { width: 174px; } .c12 { width: 147px; }
.vbar { display: flex; flex-direction: column; justify-content: space-between; align-items: center; width: 16px; padding: 9px 0 4px; background: #f0f0f0; }
.vbar .thumb { width: 14px; height: 34px; background: #cdcdcd; }

.prescriber { margin-bottom: 9px; }
.prescriber .group-head { border-color: #00f; background: linear-gradient(90deg, #fff, #1e90ff); color: #00f; }
.prescriber .group-body { border-color: #8b0000; padding-bottom: 4px; }
.find-pair { display: flex; align-items: center; height: 19px; margin: 0 16px 0 5px; }
.find-pair button { width: 54px; height: 20px; display: grid; place-items: center; }
.codes { display: grid; grid-template-columns: 69px 99px 70px 99px 51px 120px; grid-auto-rows: 19px; row-gap: 5px; align-content: start; }
.codes label:not(:first-child):not([for=dea]) { padding-left: 15px; }
.f4 { margin-left: auto; align-self: flex-end; color: #00f; font: bold 13px/28px "Noto Sans", sans-serif; }

.notes h3 { height: 19px; line-height: 16px; border-top: 2px solid #888; background: #9ab3d1; color: #ff0; font-size: 12px; font-weight: bold; }
.notes-body { display: flex; height: 61px; padding: 3px 6px 7px 2px; background: #000; }
.notes textarea { flex: 1; border: 0; padding: 0 1px; resize: none; overflow: hidden; background: #98fb98; font-weight: bold; font-size: 13px; }
.notes-body .vbar { padding: 8px 0 6px; }
.notes-buttons { display: grid; align-content: start; gap: 7px; margin-left: 5px; width: 60px; }
.notes-buttons button { height: 16px; line-height: 12px; background: #f0ffff; border: 1px solid #ccc; }

.tabs { display: flex; align-items: flex-end; height: 25px; margin-top: 8px; padding-bottom: 1px; background: #fff; }
.tabs button { height: 20px; width: 121px; border: 0; border-right: 2px solid #333; background: linear-gradient(#f0efe6, #c9c7b4); font-family: "Noto Sans", sans-serif; font-size: 11px; color: #333; }
.tabs .on { width: 232px; height: 23px; background: #247fd9; color: #fff; font-weight: bold; font-size: 12px; border-right-color: #134; }
.tabs .otc { padding-left: 16px; text-align: left; }
.tabs .more { width: 16px; height: 14px; margin: 0 0 4px auto; display: grid; place-items: center; border: 0; background: #c8c8c8; }

/* history grid */
.history { display: flex; flex-direction: column; flex: 1; margin: 1px 0 2px; border: 2px solid #777; border-top: 1px solid #134; border-right-color: #222; border-bottom-color: #222; background: #e2e2e2; }
.grid-wrap { display: flex; height: 470px; overflow: hidden; }
.grid { flex: 1; width: 100%; border-collapse: separate; border-spacing: 0; table-layout: fixed; font: bold 12px "DejaVu Sans Condensed", "DejaVu Sans", sans-serif; }
.grid th, .grid td { padding: 0; border: solid #22f; border-width: 0 1px 1px 0; overflow: hidden; white-space: nowrap; }
.grid th { height: 20px; background: #0ff; border-color: #067; font: bold 11px "DejaVu Sans Condensed", "DejaVu Sans", sans-serif; }
.grid th.end { text-align: right; padding-right: 6px; }
.grid th svg, .grid td svg { display: inline-block; width: 16px; height: 16px; vertical-align: middle; }
.grid tr { background: #fff; }
.grid tbody tr { height: 20px; }
.grid tbody tr:nth-child(even) { height: 21px; background: #e0ffff; }
.grid tbody tr.filed { background: #ffffe0; }
.grid td { height: 20px; line-height: 17px; padding-left: 5px; padding-bottom: 2px; }
.grid td.icon { padding: 0 0 0 1px; }
.grid td.no { padding: 2px 0 0; text-align: center; font-size: 9px; background: #ffffb9; border-color: #776; }
.grid td.tag { padding: 0; text-align: center; }
.grid td.lite { background: #90ee90; }
.grid td.blu { background: #00f; color: #fff; }
.grid td.grn { background: green; color: #fff; }
.grid td.no.hot { color: red; }
.grid td.no.grn { color: #000; }
.grid td.s-g { background: green; }
.grid td.s-r { background: red; }
.grid td.t-r { color: red; }
.grid td.t-b { color: #00f; }
.grid td.date { padding-left: 3px; }
.tag input { appearance: none; display: block; width: 12px; height: 13px; margin: 0 auto; background: #fff; border: 1px solid #ddd; border-top: 2px solid #777; border-left: 2px solid #777; }
.k19 { width: 19px; } .k20 { width: 20px; } .k21 { width: 21px; } .k22 { width: 22px; } .k27 { width: 27px; } .k32 { width: 32px; } .k33 { width: 33px; } .k34 { width: 34px; } .k38 { width: 38px; } .k42 { width: 42px; } .k48 { width: 48px; } .k65 { width: 65px; } .k70 { width: 70px; } .k71 { width: 71px; } .k76 { width: 76px; } .k80 { width: 80px; } .k81 { width: 81px; } .k92 { width: 92px; } .k120 { width: 120px; } .k149 { width: 149px; }
.grid-bar { display: flex; flex-direction: column; width: 18px; flex: none; background: #e8e8e8; }
.grid-bar .split { height: 7px; background: #9bc; border: 1px solid #456; }
.grid-bar .btn { height: 17px; display: grid; place-items: center; border: 1px solid; border-color: #fff #555 #555 #fff; background: #f0f0f0; }
.grid-bar .thumb { height: 58px; border: 2px solid; border-color: #fff #777 #777 #fff; background: #f0f0f0; }
.grid-bar .last { margin-top: auto; }

.actions { display: flex; margin: 5px 2px 0 4px; padding-top: 2px; border-top: 2px solid #777; gap: 2px; }
.actions button { display: flex; flex-direction: column; align-items: center; justify-content: center; gap: 2px; height: 40px; border: 2px solid #bcbcbc; background: #eee; white-space: normal; font-size: 12px; line-height: 14px; }
.actions button:disabled { color: #a0a0a0; }
.actions svg { width: 16px; height: 15px; }
.actions .a54 { width: 53px; } .actions .a56 { width: 55px; } .actions .a58 { width: 58px; } .actions .a60 { width: 61px; } .actions .a64 { width: 63px; }
.actions .arrow { width: 13px; margin-left: -3px; }
.actions .apart { margin-left: 112px; }
.actions .near { margin-left: 5px; }

.filters { display: flex; flex: 1; padding: 5px 2px 4px 6px; }
.filters input[type=checkbox] { appearance: none; width: 13px; height: 13px; border: 2px solid #b5c7dc; background: #f4f4f4; }
.radios { display: flex; align-items: flex-start; gap: 9px; width: 221px; }
.radios label { display: flex; align-items: center; gap: 5px; color: #8b0000; font-weight: bold; font-size: 11px; white-space: nowrap; }
.radios input { width: 13px; height: 13px; accent-color: #333; }
.count { flex: 1; display: flex; flex-direction: column; align-items: flex-end; gap: 1px; }
.count p { align-self: stretch; height: 16px; padding-left: 3px; background: #efefef; font: bold 12px/16px "Liberation Sans", sans-serif; }
.count label, .checks label { display: flex; align-items: center; gap: 6px; font-weight: bold; font-size: 11px; line-height: 17px; white-space: nowrap; }
.checks { width: 91px; margin: -1px 0 0 6px; }
.filter-by { display: flex; align-items: center; width: 232px; height: 40px; margin: -2px 0 0; padding: 0 7px; border: 1px solid #d6dbe2; font-size: 11px; color: #8b0000; }
.filter-by legend { padding: 0; color: #00f; }
.filter-by input { width: 117px; height: 19px; margin-left: auto; }
.legend { list-style: none; margin: -9px 0 0 5px; width: 84px; font-size: 11px; color: #333; }
.legend li { display: flex; align-items: center; gap: 6px; height: 13px; white-space: nowrap; }
.legend i { width: 12px; height: 13px; border: 1px solid #777; }
.due-now { background: green; } .not-due { background: #90ee90; } .expired { background: #f08080; }

/* right rail */
.rail { width: 88px; flex: none; padding: 6px 3px 0 2px; }
.rail-label { display: block; height: 17px; margin-left: 3px; padding-left: 3px; line-height: 15px; border: 1px solid #333; background: linear-gradient(90deg, #fff, #add8e6); color: #00008b; font-size: 12px; white-space: nowrap; }
.rail .rx-no { width: 100%; height: 20px; margin: 2px 0 4px; padding: 0 3px; background: #f0f8ff; border-color: #cde; font: bold 12px "DejaVu Sans Condensed", sans-serif; }
.bill-row { display: flex; justify-content: space-between; align-items: center; padding-right: 2px; }
.bill-row b { width: 44px; margin-left: 4px; }
.bill-row button { display: grid; place-items: center; width: 24px; height: 19px; }
.bill-row svg { width: 15px; height: 13px; }
.combo { display: flex; height: 20px; margin: 0 0 35px 4px; }
.combo input { flex: 1; border: 0; padding: 0 4px; background: linear-gradient(#ffdcae, #fff0e0); font: bold 12px "DejaVu Sans Condensed", sans-serif; }
.combo button { width: 14px; display: grid; place-items: center; border: 0; background: #f3f3f3; }
.bill-type { display: block; margin: 0 0 3px 4px; line-height: 14px; font-family: "Noto Sans", sans-serif; font-size: 11px; }
.sel { display: flex; align-items: center; width: 72px; height: 22px; margin-left: 4px; padding-right: 6px; border: 1px solid #adadad; background: #e1e1e1; }
.sel select { appearance: none; flex: 1; border: 0; background: none; padding-left: 3px; font-size: 11px; font-weight: bold; }
.sel .chev { border-width: 0 1px 1px 0; }
.rail-buttons { display: grid; grid-auto-rows: 31px; gap: 4px; margin: 10px 3px 0 5px; }
.rail-buttons button { display: flex; align-items: center; justify-content: space-between; padding: 0 6px 0 2px; border-width: 2px; border-color: #c0c0c0; font-size: 11px; line-height: 13px; white-space: normal; text-align: right; }
.rail-buttons svg { width: 18px; height: 18px; }
.rail-buttons button span { width: 56px; margin-left: -20px; }
.rail-buttons button:disabled { color: #a5a5a5; background: #ccc; }

.hint { display: flex; align-items: center; height: 25px; padding: 3px 0 1px; border-top: 2px solid #fff; border-bottom: 1px solid #aaa; background: #f0f0f0; font-size: 11px; font-weight: bold; color: #222; }
.hint span { height: 18px; line-height: 18px; border-right: 1px solid #ccc; }
.hint .h1 { width: 536px; padding-left: 2px; }
.hint .h2 { flex: 1; padding-left: 4px; }
.hint .h3 { width: 98px; padding-right: 10px; text-align: right; }
.hint .h4 { width: 74px; border: 0; }

.statusbar { display: flex; gap: 1px; height: 33px; border-top: 2px solid #fff; border-bottom: 2px solid #222; background: #247fd9; color: navy; font-size: 12px; }
.statusbar span { display: flex; align-items: center; padding: 0 3px; border: 1px solid #2a6cc4; background: linear-gradient(#d6e5fb, #7aa6ee); white-space: nowrap; overflow: hidden; }
.statusbar .two { white-space: normal; line-height: 13px; }
.s59 { width: 59px; } .s78 { width: 78px; } .s88 { width: 88px; } .s98 { width: 98px; } .s137 { width: 136px; }
.statusbar .s59 { padding: 0 2px; }
.statusbar .unb { background: red; } .statusbar .erx { background: green; color: #fff; } .statusbar .rfq { background: #ff0; } .statusbar .lbq { background: orange; } .statusbar .inx { background: #f08080; } .statusbar .fax { background: purple; color: #fff; } .statusbar .smsq { background: #87ceeb; }
.statusbar .task { background: #f0f0f0; gap: 4px; }
.task svg { width: 13px; height: 14px; }
.statusbar .fill { flex: 1; }
.sys { display: flex; align-items: center; gap: 3px; width: 96px; padding-left: 2px; border: 0; background: #ff8000; color: navy; }
.sys svg { width: 14px; height: 14px; }

/* popup sits over the whole window */
.popup { position: absolute; top: 359px; left: calc(50% - 363px); width: 724px; background: #f0f0f0; border-top: 1px solid #666; box-shadow: 0 4px 14px rgba(0, 0, 0, .45); }
.popup-title { display: flex; justify-content: space-between; align-items: center; height: 29px; padding: 0 1px 0 8px; background: #fff; font-family: "Noto Sans", sans-serif; font-size: 11px; }
.popup-title button { width: 19px; height: 19px; margin-top: 4px; border: 0; background: #c75050; color: #fff; font-weight: bold; line-height: 15px; }
.popup-body { height: 258px; border: 1px solid #111; background: #fff; }
.popup-head { display: flex; align-items: center; height: 31px; padding: 0 2px; }
.popup-head svg { width: 24px; height: 24px; }
.popup-head h1 { flex: 1; text-align: center; font: bold 19px "DejaVu Sans", sans-serif; }
.note-table { width: 100%; border-collapse: separate; border-spacing: 0; table-layout: fixed; }
.note-table th { height: 21px; padding: 0; border: solid #22229c; border-width: 0 1px 1px 0; background: #e6e6fa; font: bold 11px "Noto Sans", sans-serif; }
.note-table td { height: 21px; padding: 0 0 3px 5px; border: solid #222; border-width: 0 1px 1px 0; background: #f0f8ff; font: bold 12px "DejaVu Sans", sans-serif; }
.note-table td:last-child { padding-left: 3px; }
.note-table .sel-row td { height: 22px; background: linear-gradient(#fbe08c, #ffe4c0); border-bottom-width: 2px; }
.note-table .mid { padding: 0; text-align: center; }
.note-table input { appearance: none; display: block; width: 13px; height: 13px; margin: 1px auto 0; border: 1px solid #333; background: #fff; }
.k91 { width: 91px; } .k118 { width: 118px; }
.popup-foot { display: flex; justify-content: flex-end; gap: 8px; height: 42px; padding: 7px 12px 9px; }
.popup-foot button { display: flex; align-items: center; width: 80px; padding-left: 2px; font: bold 12px "DejaVu Sans Condensed", "DejaVu Sans", sans-serif; border-width: 2px; border-color: #c4c4c4; gap: 12px; }
.popup-foot .ok { border-color: #0078d7; gap: 20px; }
.popup-foot svg { width: 16px; height: 16px; }
```

FILE: script.js
```js
// no, rx, rx colour, aut, rf, left, ins, status, drug, text colour, qty, ds, date, cost, price, doctor, in da, lp, note, doc, clip, o, delivery, dvrf, pvrf, queue, sync
var Z = "ZHIVAGO, DOCTOR", ZL = "ZHIVAGO, DOCTOR - L", CALL = "CALL FOR PA";
var data = [
    ["415674",   "",     0, 0, 0, "ADA", "U", "r", "IBUPROFEN 800MG TAB", "t-r", "", "", "", "", "", "", "", "Yes (", "", "No", "", "1", "box", "Re-ve", "N", "BILLING EXC", ""],
    ["415863-R", "lite", 12, 1, 11, "ADV", "B", "r", "IBUPROFEN 800MG TAB", "t-r", "", "", "", "", "", "", "", "No", "n", "No", "", "p2", "bin", "", "N", "", "s"],
    ["415834-R", "blu",  1, 1, 0, "C", "F", "", "ADVAIR DISKUS 100/50", "t-b", "", "", "", "", "", "", "", "No", "", "No", "", "1", "", "", "N", CALL, ""],
    ["415821-R", "lite", 3, 1, 2, "004337", "B", "g", "GABAPENTIN 600MG TAB", "t-r", "", "", "", "", "", "", "", "No", "", "No", "", "1", "bin", "", "N", "READY FOR F", "s"],
    ["415739-R", "lite", 3, 1, 2, "PAI", "B", "r", "ATORVASTATIN CALCIUM 40MG TAB", "t-r", "", "", "", "", "", "", "", "No", "", "No", "", "p2", "bin", "", "N", "", "s"],
    ["415729-R", "lite", 12, 1, 11, "C", "B", "g", "MOTRIN 800MG TAB", "t-r", "", "", "", "", "", "", "", "No", "", "No", "", "1", "bin", "", "N", "", "s"],
    ["415728-R", "lite", 12, 1, 11, "C", "B", "g", "ATORVASTATIN CALCIUM 40MG TAB", "t-r", "", "", "", "", "", "", "", "No", "", "No", "", "1", "bin", "", "N", "", "s"],
    ["415331-R", "lite", 5, 2, 3, "C", "B", "g", "WARFARIN SODIUM 5MG TAB", "t-r", "", "", "", "", "", "", "", "No", "", "No", "", "0", "bin", "", "N", "", "s"],
    ["415897",   "lite", 3, 0, 3, "004337", "B", "g", "IBUPROFEN 800MG TAB", "", "", "", "", "", "", "", "", "No", "", "No", "", "1", "cart", "Re-ve", "N", "PV1", ""],
    ["415890",   "",     0, 0, 0, "C", "B", "g", "LISINOPRIL 10MG TAB", "", "", "", "", "", "", "", "", "No", "", "No", "", "1", "cart", "", "N", CALL, "s"],
    ["415889-R", "lite", 3, 1, 2, "C", "B", "g", "SILDENAFIL CITRATE 25MG TAB", "", "", "", "", "", "", "", "", "Yes (", "", "No", "", "1", "cart", "", "N", CALL, ""],
    ["415889",   "",     3, 0, 2, "C", "B", "g", "SILDENAFIL CITRATE 25MG TAB", "", "90.000", "30", "08/23/2023", "$11.66", "$11.66", Z, "", "No", "", "No", "", "1", "cart", "", "N", CALL, ""],
    ["415701-R", "blu",  3, 2, 1, "C", "F", "", "ATORVASTATIN CALCIUM 40MG TAB", "t-b", "30.000", "30", "08/22/2023", "$243.55", "$243.55", Z, "30", "Queu", "", "No", "", "1", "bin", "", "N", CALL, ""],
    ["415886",   "",     0, 0, 0, "004337", "B", "g", "IBUPROFEN 400MG TAB", "", "30.000", "30", "08/22/2023", "$50.00", "$268.20", Z, "0", "No", "", "Yes", "", "g3", "cart", "", "Y", CALL, ""],
    ["415818-R", "lite", 3, 1, 2, "C", "B", "g", "IBUPROFEN 800MG TAB", "", "30.000", "30", "08/09/2023", "$11.64", "$11.64", Z, "24", "No", "", "No", "", "1", "cart", "", "N", CALL, ""],
    ["415808-R", "lite", 12, 2, 10, "C", "B", "g", "IBUPROFEN 800MG TAB", "", "30.000", "30", "08/09/2023", "$6.64", "$6.64", Z, "24", "No", "n", "No", "", "1", "cart", "", "N", CALL, ""],
    ["415439-R", "grn",  4, 4, 0, "C", "B", "g", "ACETAMINOPHEN 500MG TAB", "", "30.000", "30", "08/09/2023", "$18.19", "$18.19", ZL, "0", "No", "", "Yes", "", "p2", "cart", "", "N", CALL, ""],
    ["415863",   "",     12, 0, 11, "12345", "U", "r", "IBUPROFEN 800MG TAB", "", "30.000", "30", "07/27/2023", "$0.00", "$6.00", Z, "", "No", "n", "No", "", "1", "cart", "Pass", "N", CALL, ""],
    ["415701-R", "",     3, 1, 1, "C", "U", "r", "ATORVASTATIN CALCIUM 40MG TAB", "t-r", "30.000", "30", "07/21/2023", "$243.55", "$243.55", Z, "", "Yes (", "", "No", "N", "1", "box", "Pass", "Y", CALL, ""],
    ["415834",   "",     0, 0, 0, "C", "B", "g", "ADVAIR DISKUS 100/50 100-50MCG IN", "", "14.000", "30", "07/07/2023", "$227.45", "$227.45", Z, "", "No", "", "No", "", "1", "cart", "", "Y", CALL, ""],
    ["415439-R", "",     3, 3, 0, "C", "B", "g", "ACETAMINOPHEN 500MG TAB", "", "30.000", "30", "07/03/2023", "$16.99", "$16.99", ZL, "", "Queu", "", "Yes", "", "p2", "cart", "", "N", CALL, ""],
    ["415439-R", "",     3, 2, 0, "C", "B", "g", "ACETAMINOPHEN 500MG TAB", "", "30.000", "30", "07/03/2023", "$16.99", "$16.99", ZL, "", "Yes (", "", "Yes", "", "p2", "cart", "", "Y", CALL, ""]
];

function icon(name) {
    return '<svg><use href="#i-' + name + '"/></svg>';
}
function td(text, cls) {
    return "<td" + (cls ? ' class="' + cls + '"' : "") + ">" + text + "</td>";
}

var html = "";
for (var i = 0; i < data.length; i++) {
    var r = data[i];
    var o = r[21], oCls = "";
    if (o[0] == "p") { o = icon("phone") + " " + o[1]; oCls = "icon"; }
    if (o[0] == "g") { o = icon("page") + " " + o[1]; oCls = "icon"; }
    html += "<tr" + (r[1] == "blu" ? ' class="filed"' : "") + ">";
    html += td(i + 1, "no " + r[1] + (r[9] == "t-r" ? " hot" : ""));
    html += td('<input type="checkbox" aria-label="Tag ' + r[0] + '">', "tag");
    html += td(r[0], r[1]) + td(r[2]) + td(r[3]) + td(r[4]) + td(r[5]);
    html += td(r[6], r[7] ? "s-" + r[7] : "");
    html += td(r[8], r[9]) + td(r[10]) + td(r[11]) + td(r[12], "date") + td(r[13]) + td(r[14]) + td(r[15]) + td(r[16]) + td(r[17]);
    html += td(r[18] ? icon("note") : "", "icon") + td(r[19]);
    html += td(r[20] ? icon("clip") + " " + r[20] : "", "icon") + td(o, oCls) + td("");
    html += td(r[22] ? icon(r[22]) : "", "icon");
    html += td(r[23], r[23] == "Pass" ? "s-g" : r[23] ? "s-r" : "");
    html += td(r[24], r[24] == "Y" ? "s-g" : "s-r");
    html += td(r[25]) + td(r[26] ? icon("sync") : "", "icon") + "</tr>";
}
document.getElementById("rows").innerHTML = html;
```
